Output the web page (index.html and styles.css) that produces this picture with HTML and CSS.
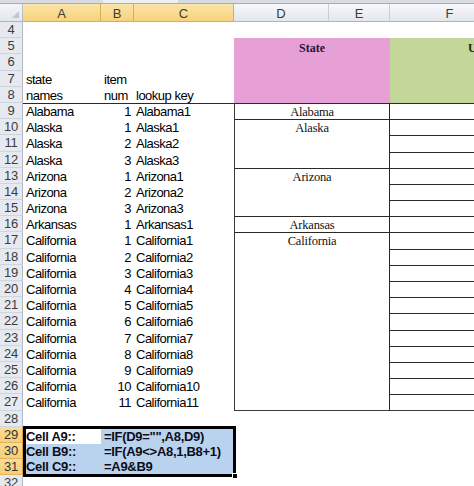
FILE: index.html
```html
<!DOCTYPE html>
<html>
<head>
<meta charset="utf-8">
<link rel="stylesheet" href="styles.css">
</head>
<body>
<div class="strip"><div class="tab"></div></div>
<div class="heads">
  <div class="corner"></div>
  <div class="hsel">A</div>
  <div class="hsel">B</div>
  <div class="hsel">C</div>
  <div>D</div>
  <div>E</div>
  <div>F</div>
</div>
<div class="sheet">
  <div class="rh">4</div>
  <div class="rh">5</div>
  <div class="pink">State</div>
  <div class="green">Units</div>
  <div class="rh">6</div>
  <div class="rh">7</div><div class="c">state</div><div class="c">item</div>
  <div class="rh">8</div><div class="c">names</div><div class="c">num</div><div class="c cc">lookup key</div>

  <div class="rh">9</div><div class="c top">Alabama</div><div class="c num top">1</div><div class="c cc top">Alabama1</div>
  <div class="st">Alabama</div><div class="f"></div>
  <div class="rh">10</div><div class="c">Alaska</div><div class="c num">1</div><div class="c cc">Alaska1</div>
  <div class="st r3">Alaska</div><div class="f"></div>
  <div class="rh">11</div><div class="c">Alaska</div><div class="c num">2</div><div class="c cc">Alaska2</div><div class="f"></div>
  <div class="rh">12</div><div class="c">Alaska</div><div class="c num">3</div><div class="c cc">Alaska3</div><div class="f"></div>
  <div class="rh">13</div><div class="c">Arizona</div><div class="c num">1</div><div class="c cc">Arizona1</div>
  <div class="st r3">Arizona</div><div class="f"></div>
  <div class="rh">14</div><div class="c">Arizona</div><div class="c num">2</div><div class="c cc">Arizona2</div><div class="f"></div>
  <div class="rh">15</div><div class="c">Arizona</div><div class="c num">3</div><div class="c cc">Arizona3</div><div class="f"></div>
  <div class="rh">16</div><div class="c">Arkansas</div><div class="c num">1</div><div class="c cc">Arkansas1</div>
  <div class="st">Arkansas</div><div class="f"></div>
  <div class="rh">17</div><div class="c">California</div><div class="c num">1</div><div class="c cc">California1</div>
  <div class="st r11 last">California</div><div class="f"></div>
  <div class="rh">18</div><div class="c">California</div><div class="c num">2</div><div class="c cc">California2</div><div class="f"></div>
  <div class="rh">19</div><div class="c">California</div><div class="c num">3</div><div class="c cc">California3</div><div class="f"></div>
  <div class="rh">20</div><div class="c">California</div><div class="c num">4</div><div class="c cc">California4</div><div class="f"></div>
  <div class="rh">21</div><div class="c">California</div><div class="c num">5</div><div class="c cc">California5</div><div class="f"></div>
  <div class="rh">22</div><div class="c">California</div><div class="c num">6</div><div class="c cc">California6</div><div class="f"></div>
  <div class="rh">23</div><div class="c">California</div><div class="c num">7</div><div class="c cc">California7</div><div class="f"></div>
  <div class="rh">24</div><div class="c">California</div><div class="c num">8</div><div class="c cc">California8</div><div class="f"></div>
  <div class="rh">25</div><div class="c">California</div><div class="c num">9</div><div class="c cc">California9</div><div class="f"></div>
  <div class="rh">26</div><div class="c">California</div><div class="c num">10</div><div class="c cc">California10</div><div class="f"></div>
  <div class="rh">27</div><div class="c">California</div><div class="c num">11</div><div class="c cc">California11</div><div class="f last"></div>
  <div class="rh">28</div>
  <div class="rh rsel">29</div>
  <div class="selbox">
    <div class="sc active">Cell A9::</div><div class="sc formula">=IF(D9="",A8,D9)</div>
    <div class="sc">Cell B9::</div><div class="sc formula">=IF(A9&lt;&gt;A8,1,B8+1)</div>
    <div class="sc">Cell C9::</div><div class="sc formula">=A9&amp;B9</div>
    <div class="handle"></div>
  </div>
  <div class="rh rsel">30</div>
  <div class="rh rsel">31</div>
  <div class="rh">32</div>
</div>
</body>
</html>
```
FILE: styles.css
```css
* { box-sizing: border-box; }
html, body { margin: 0; padding: 0; }
body {
  width: 474px;
  height: 486px;
  overflow: hidden;
  background: #fff;
  font-family: "Liberation Sans", Arial, sans-serif;
}
.strip {
  height: 4px;
  background: #d8dce2;
  border-bottom: 1px solid #a7aeb8;
  display: flex;
}
.strip .tab {
  margin-left: 103px;
  width: 75px;
  background: #eef0f3;
}
.heads {
  display: grid;
  grid-template-columns: 23px 78px 33px 100px 95px 61px 120px;
  height: 18px;
}
.heads div {
  display: flex;
  align-items: center;
  justify-content: center;
  font-size: 13px;
  color: #3c3c3c;
  padding-top: 2px;
  background: linear-gradient(#f6f7f9, #e3e7ed);
  border-right: 1px solid #c9ced5;
  border-bottom: 1px solid #a9b3c1;
}
.heads .hsel {
  background: linear-gradient(#fbe4aa, #f7d27a);
  border-right-color: #dcae52;
  border-bottom-color: #f0a83a;
}
.heads .corner {
  position: relative;
  background: linear-gradient(#f3f4f6, #e3e7ed);
  border-right-color: #b8c0cc;
}
.corner::after {
  content: "";
  position: absolute;
  right: 3px;
  bottom: 3px;
  width: 0;
  height: 0;
  border-left: 7px solid transparent;
  border-bottom: 7px solid #c3c6cb;
}
.sheet {
  display: grid;
  grid-template-columns: 23px 78px 33px 100px 95px 61px 120px;
  grid-template-rows: repeat(29, 16.2px);
}
.rh {
  grid-column: 1;
  background: #e6eaf0;
  border-bottom: 1px solid #cfd5dd;
  border-right: 1px solid #aeb8c6;
  color: #3c3c3c;
  font-size: 13px;
  letter-spacing: -0.3px;
  line-height: 16px;
  text-align: center;
}
.rh.rsel {
  background: linear-gradient(#f9dc96, #f6cf78);
  border-bottom-color: #e4b45a;
  border-right-color: #e0a13c;
  color: #333;
}
.c {
  font-size: 13px;
  letter-spacing: -0.5px;
  line-height: 17px;
  padding: 0 3px;
  white-space: nowrap;
  color: #000;
}
.c.cc { padding-left: 2px; }
.c.num { text-align: right; }
.c.top { border-top: 1px solid #2a2a2a; line-height: 15px; }
.pink {
  grid-column: 5 / span 2;
  grid-row: span 4;
  background: #e6a0d6;
  font: bold 12px "Liberation Serif", "Times New Roman", serif;
  color: #2a1230;
  text-align: center;
  padding-top: 3px;
}
.green {
  grid-column: 7;
  grid-row: span 4;
  background: #c4d79b;
  font: bold 12px "Liberation Serif", "Times New Roman", serif;
  color: #1e2a10;
  padding-left: 78px;
  padding-top: 3px;
  white-space: nowrap;
}
.st {
  grid-column: 5 / span 2;
  border-left: 1px solid #3a3a3a;
  border-right: 1px solid #2a2a2a;
  border-top: 1px solid #2a2a2a;
  font: 12.5px "Liberation Serif", "Times New Roman", serif;
  letter-spacing: -0.2px;
  color: #111;
  text-align: center;
  line-height: 14px;
  padding-top: 1px;
}
.st.r3 { grid-row: span 3; }
.st.r11 { grid-row: span 11; }
.st.last { border-bottom: 1px solid #3a3a3a; }
.f {
  grid-column: 7;
  border-top: 1px solid #2a2a2a;
}
.f.last { border-bottom: 1px solid #3a3a3a; }
.selbox {
  grid-column: 2 / span 3;
  grid-row: span 3;
  margin: -1px -2px -2px 0;
  position: relative;
  background: #b9d3ef;
  border: 3px solid #000;
  display: grid;
  grid-template-columns: 75px 1fr;
  grid-template-rows: repeat(3, 1fr);
}
.sc {
  font-size: 13px;
  font-weight: bold;
  letter-spacing: -0.3px;
  color: #0d0d1a;
  white-space: nowrap;
  line-height: 15px;
  padding-left: 0;
}
.sc.active { background: #fff; }
.sc.formula { padding-left: 3px; }
.handle {
  position: absolute;
  right: -5px;
  bottom: -5px;
  width: 6px;
  height: 6px;
  background: #000;
  border: 1px solid #fff;
}
```
